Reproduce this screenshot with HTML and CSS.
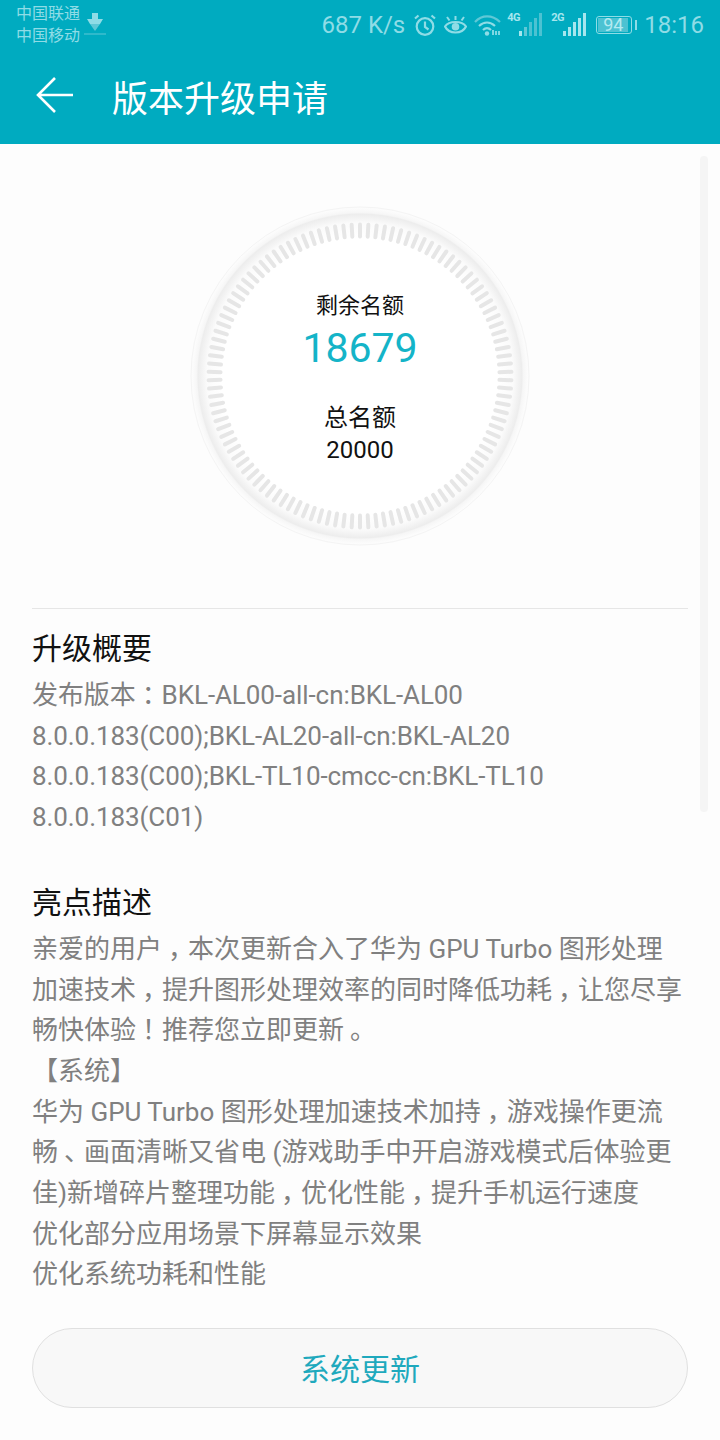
FILE: index.html
```html
<!DOCTYPE html>
<html lang="zh-CN">
<head>
    <meta charset="UTF-8">
    <meta name="viewport" content="width=device-width, initial-scale=1.0">
    <title>版本升级申请</title>
    <link rel="stylesheet" href="styles.css">
</head>
<body>
    <header class="top">
        <div class="status">
            <div class="carriers">
                <div>中国联通</div>
                <div>中国移动</div>
            </div>
            <svg class="download" width="24" height="28" viewBox="0 0 24 28">
                <path d="M8 1h6v6h5l-3 5H6L3 7h5z" fill="#8fdce6"/>
                <path d="M6 12h10l-5 7z" fill="#5fc8d6"/>
                <rect x="0" y="21.5" width="22" height="1" fill="#5fc8d6"/>
            </svg>
            <div class="status-right">
                <span class="speed">687 K/s</span>
                <svg class="ic-alarm" width="22" height="22" viewBox="0 0 22 22" fill="none" stroke="#8fdce6" stroke-width="2.2">
                    <circle cx="11" cy="12.500" r="8.300"/>
                    <path d="M11 7.500v5.500l3.500 2.500M1 4.500L4.500 1.500M21 4.500L17.500 1.500"/>
                </svg>
                <svg class="ic-eye" width="23" height="18" viewBox="0 0 23 18" fill="none" stroke="#8fdce6" stroke-width="2.2">
                    <path d="M1 10.500C5 4.500 18 4.500 22 10.500C18 18.500 5 18.500 1 10.500z"/>
                    <circle cx="11.500" cy="10.700" r="3.800" fill="#8fdce6" stroke="none"/>
                    <path d="M3 1l2.500 3.500M11.500 0v4M20 1l-2.500 3.500" stroke-width="2"/>
                </svg>
                <svg class="ic-wifi" width="27" height="22" viewBox="0 0 27 22" fill="none" stroke="#8fdce6" stroke-width="2.2">
                    <path d="M1 8C8 0.500 18 0.500 26 8" stroke="#5fc8d6"/>
                    <path d="M5 12C10 7.500 16 7.500 21 12"/>
                    <path d="M9 16C11.500 13.500 14.500 13.500 17 16"/>
                    <circle cx="13" cy="19.500" r="2.200" fill="#8fdce6" stroke="none"/>
                    <path d="M19 16v5M22 17v4M25 17v4" stroke-width="1.500" stroke="#a6e6ee"/>
                </svg>
                <div class="signal sig-4g">
                    <span class="net">4G</span>
                    <svg width="23" height="23" viewBox="0 0 23 23">
                        <rect x="0" y="18" width="3" height="5" fill="#a6e6ee"/>
                        <rect x="5" y="14" width="3" height="9" fill="#5fc8d6"/>
                        <rect x="10" y="9" width="3" height="14" fill="#4cc2d2"/>
                        <rect x="15" y="5" width="3" height="18" fill="#4cc2d2"/>
                        <rect x="20" y="0" width="3" height="23" fill="#4cc2d2"/>
                    </svg>
                </div>
                <div class="signal sig-2g">
                    <span class="net">2G</span>
                    <svg width="23" height="23" viewBox="0 0 23 23">
                        <rect x="0" y="18" width="3" height="5" fill="#a6e6ee"/>
                        <rect x="5" y="14" width="3" height="9" fill="#a6e6ee"/>
                        <rect x="10" y="9" width="3" height="14" fill="#a6e6ee"/>
                        <rect x="15" y="5" width="3" height="18" fill="#a6e6ee"/>
                        <rect x="20" y="0" width="3" height="23" fill="#a6e6ee"/>
                    </svg>
                </div>
                <div class="battery">
                    <div class="battery-body"><span>94</span></div>
                    <div class="battery-cap"></div>
                </div>
                <span class="clock">18:16</span>
            </div>
        </div>
        <div class="titlebar">
            <svg class="back" width="38" height="38" viewBox="0 0 38 38" fill="none" stroke="#fff" stroke-width="2.6">
                <path d="M37 19H2M19 2L2 19L19 36"/>
            </svg>
            <h1>版本升级申请</h1>
        </div>
    </header>

    <main class="content">
        <div class="scrollbar"></div>

        <section class="gauge">
            <svg class="dial" width="340" height="340" viewBox="0 0 340 340">
                <defs>
                    <radialGradient id="dial-fill">
                        <stop offset="0.82" stop-color="#ffffff"/>
                        <stop offset="0.905" stop-color="#fbfbfb"/>
                        <stop offset="0.935" stop-color="#f3f3f3"/>
                        <stop offset="0.958" stop-color="#ededed"/>
                        <stop offset="0.966" stop-color="#f6f6f6"/>
                        <stop offset="0.988" stop-color="#fbfbfb"/>
                        <stop offset="1" stop-color="#fdfdfd"/>
                    </radialGradient>
                </defs>
                <circle class="dial-disc" cx="170" cy="170" r="169" fill="url(#dial-fill)"/>
                <g id="dial-ticks" class="dial-ticks"></g>
            </svg>
            <div class="gauge-text">
                <div class="gauge-label">剩余名额</div>
                <div class="gauge-value">18679</div>
                <div class="gauge-label total">总名额</div>
                <div class="gauge-total">20000</div>
            </div>
        </section>

        <section class="info info-first">
            <h2>升级概要</h2>
            <p class="versions">发布版本<span class="pn">：</span>BKL-AL00-all-cn:BKL-AL00<br>8.0.0.183(C00);BKL-AL20-all-cn:BKL-AL20<br>8.0.0.183(C00);BKL-TL10-cmcc-cn:BKL-TL10<br>8.0.0.183(C01)</p>
        </section>

        <section class="info info-second">
            <h2>亮点描述</h2>
            <p>亲爱的用户<span class="pn">，</span>本次更新合入了华为 GPU Turbo 图形处理<br>加速技术<span class="pn">，</span>提升图形处理效率的同时降低功耗<span class="pn">，</span>让您尽享<br>畅快体验<span class="pn">！</span>推荐您立即更新<span class="pn">。</span><br>【系统】<br>华为 GPU Turbo 图形处理加速技术加持<span class="pn">，</span>游戏操作更流<br>畅<span class="pn">、</span>画面清晰又省电 (游戏助手中开启游戏模式后体验更<br>佳)新增碎片整理功能<span class="pn">，</span>优化性能<span class="pn">，</span>提升手机运行速度<br>优化部分应用场景下屏幕显示效果<br>优化系统功耗和性能</p>
        </section>

        <button class="update-btn">系统更新</button>
    </main>

    <script src="script.js"></script>
</body>
</html>
```

FILE: styles.css
```css
* {
    box-sizing: border-box;
}

html, body {
    height: 100%;
}

body {
    margin: 0;
    height: 1440px;
    overflow: hidden;
    background: #fdfdfd;
    font-family: Roboto, "Noto Sans CJK SC", sans-serif;
}

.top {
    height: 144px;
    background: #00abc0;
}

.status {
    height: 48px;
    display: flex;
    padding-left: 16px;
    color: #8fdce6;
}

.carriers {
    font-size: 16px;
    line-height: 22px;
    padding-top: 3px;
    width: 64px;
}

.download {
    margin: 12px 0 0 4px;
}

.status-right {
    flex: 1;
    display: flex;
    align-items: center;
    justify-content: flex-end;
    padding: 1px 16px 0 0;
}

.speed {
    font-size: 24px;
    margin-right: 9px;
}

.ic-alarm {
    margin-right: 8px;
}

.ic-eye {
    margin-right: 7px;
}

.ic-wifi {
    margin-right: 6px;
}

.signal {
    position: relative;
    width: 35px;
    height: 23px;
    display: flex;
    justify-content: flex-end;
}

.net {
    position: absolute;
    left: 0;
    top: 0;
    font-size: 11px;
    line-height: 10px;
    letter-spacing: -0.5px;
    font-weight: 700;
    color: #a6e6ee;
}

.sig-4g {
    margin-right: 9px;
}

.sig-2g {
    margin-right: 10px;
}

.battery {
    display: flex;
    align-items: center;
    margin-right: 7px;
}

.battery-body {
    width: 36px;
    height: 18px;
    border: 1px solid #8fdce6;
    border-radius: 3px;
    padding: 1px;
}

.battery-body span {
    display: block;
    width: 94%;
    height: 100%;
    background: #4cc2d2;
    font-size: 18px;
    line-height: 14px;
    text-align: center;
    color: #b4eaf1;
}

.battery-cap {
    width: 2px;
    height: 10px;
    margin-left: 3px;
    background: #8fdce6;
}

.clock {
    font-size: 24px;
}

.titlebar {
    height: 96px;
    display: flex;
    align-items: center;
    padding-left: 36px;
}

.back {
    margin-top: -2px;
}

.titlebar h1 {
    margin: 0 0 0 38px;
    font-size: 36px;
    font-weight: 400;
    color: #fff;
}

.content {
    position: relative;
    height: 1296px;
    padding: 62px 32px 0;
}

.scrollbar {
    position: absolute;
    left: 700px;
    top: 12px;
    width: 8px;
    height: 656px;
    border-radius: 4px;
    background: #f5f5f5;
}

.gauge {
    display: grid;
    justify-items: center;
    align-items: center;
    padding-bottom: 62px;
    border-bottom: 1px solid #e6e6e6;
}

.dial, .gauge-text {
    grid-area: 1 / 1;
}

.dial {
    display: block;
}

.dial-disc {
    stroke: #f4f4f4;
    stroke-width: 1;
}

.dial-ticks line {
    stroke: #e6e6e6;
    stroke-width: 4;
    stroke-linecap: round;
}

.gauge-text {
    padding-top: 6px;
    text-align: center;
    color: #111;
}

.gauge-label {
    font-size: 22px;
    line-height: 30px;
}

.gauge-label.total {
    font-size: 24px;
}

.gauge-value {
    font-size: 41px;
    line-height: 54px;
    margin-bottom: 28px;
    color: #14b4c8;
}

.gauge-total {
    font-size: 24px;
    line-height: 34px;
}

.info h2 {
    margin: 0 0 6px;
    font-size: 30px;
    line-height: 40px;
    font-weight: 400;
    color: #111;
}

.info p {
    margin: 0;
    font-size: 26px;
    line-height: 40.7px;
    color: #808080;
}

.info p.versions {
    letter-spacing: -0.08px;
}

/* half width punctuation glyph, padded back out to a full cell */
.pn {
    font-feature-settings: "halt";
    margin-left: 6px;
    margin-right: 7px;
}

.info-first {
    margin-top: 20px;
}

.info-second {
    margin-top: 45px;
}

.update-btn {
    display: block;
    width: 656px;
    height: 80px;
    margin-top: 33px;
    padding-bottom: 3px;
    border: 1px solid #e0e0e0;
    border-radius: 40px;
    background: #f8f8f8;
    font-family: inherit;
    font-size: 30px;
    color: #1fa9bd;
}
```

FILE: script.js
```js
// Draw the dial ticks
const ticks = document.getElementById("dial-ticks");
const tickCount = 114;

for (let i = 0; i < tickCount; i++) {
    const line = document.createElementNS("http://www.w3.org/2000/svg", "line");
    line.setAttribute("x1", 170);
    line.setAttribute("x2", 170);
    line.setAttribute("y1", 18.5);
    line.setAttribute("y2", 30.5);
    line.setAttribute("transform", `rotate(${(i * 360) / tickCount} 170 170)`);
    ticks.appendChild(line);
}
```
